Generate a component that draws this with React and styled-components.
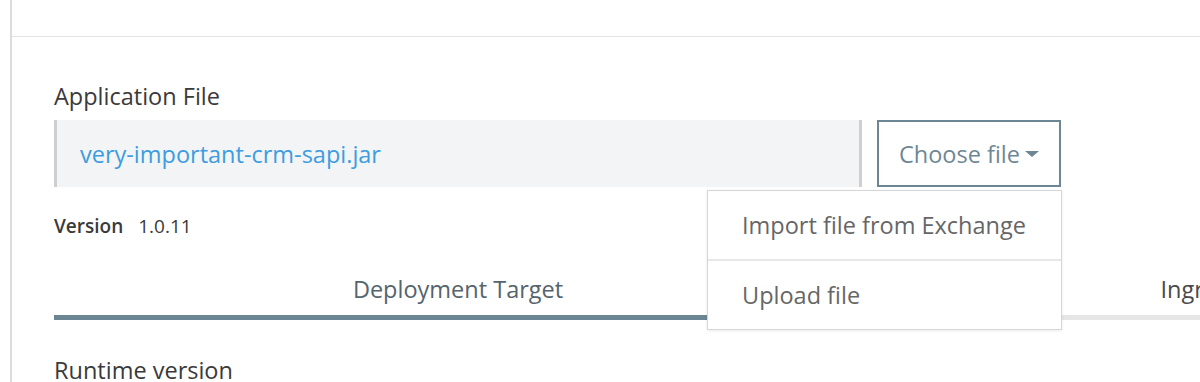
import styled, { createGlobalStyle } from "styled-components";

const GlobalStyles = createGlobalStyle`
  html, body {
    margin: 0;
    padding: 0;
    background: #fff;
    font-family: "Open Sans", "Liberation Sans", sans-serif;
  }
`;

const Page = styled.div`
  margin-left: 10px;
  border-left: 2px solid #dcdcdc;
  height: 382px;
  overflow: hidden;
`;

const TopBar = styled.div`
  height: 36px;
  border-bottom: 1px solid #e4e4e4;
`;

const Content = styled.div`
  position: relative;
  padding: 44px 0 0 42px;
`;

const Label = styled.div`
  font-size: 23.5px;
  line-height: 30px;
  color: #3a3a3a;
  margin-bottom: 9px;
`;

const FileRow = styled.div`
  display: flex;
  gap: 15px;
`;

const FileInput = styled.div`
  box-sizing: border-box;
  width: 808px;
  height: 67px;
  display: flex;
  align-items: center;
  padding-left: 23px;
  background: #f3f4f5;
  border-left: 3px solid #cfcfcf;
  border-right: 3px solid #cfcfcf;
  color: #3d9de0;
  font-size: 23.5px;
`;

const ChooseButton = styled.button`
  box-sizing: border-box;
  width: 184px;
  height: 67px;
  display: flex;
  align-items: center;
  gap: 5px;
  padding: 0 0 0 20px;
  background: #fff;
  border: 2px solid #6d8694;
  color: #6f8795;
  font-family: inherit;
  font-size: 23.5px;
`;

const Caret = styled.span`
  width: 0;
  height: 0;
  border-left: 7.5px solid transparent;
  border-right: 7.5px solid transparent;
  border-top: 6px solid #6f8795;
  margin-top: 1px;
`;

const Menu = styled.div`
  position: absolute;
  left: 695px;
  top: 153px;
  width: 353px;
  background: #fff;
  border: 1px solid #d6d6d6;
  box-shadow: 0 1px 3px rgba(0, 0, 0, 0.08);
  z-index: 2;
`;

const MenuItem = styled.div`
  height: 68px;
  display: flex;
  align-items: center;
  padding-left: 34px;
  font-size: 23.5px;
  color: #666;
  & + & {
    border-top: 2px solid #e8e8e8;
  }
`;

const VersionRow = styled.div`
  display: flex;
  gap: 15px;
  margin-top: 27px;
  font-size: 19px;
  line-height: 24px;
  color: #3a3a3a;
`;

const VersionKey = styled.span`
  font-weight: 600;
`;

const Tabs = styled.div`
  display: flex;
  margin-top: 35px;
`;

const Tab = styled.div`
  flex: 0 0 ${(p) => p.$width}px;
  height: 42px;
  display: flex;
  justify-content: center;
  align-items: flex-start;
  font-size: 23.5px;
  line-height: 32px;
  color: ${(p) => (p.$active ? "#55646d" : "#4a4a4a")};
  border-bottom: 5px solid ${(p) => (p.$active ? "#6c8592" : "#e6e6e6")};
`;

const SectionLabel = styled.div`
  font-size: 23.5px;
  line-height: 32px;
  color: #3a3a3a;
  margin-top: 34px;
`;

export default function App() {
  return (
    <>
      <GlobalStyles />
      <Page>
        <TopBar />
        <Content>
          <Label>Application File</Label>
          <FileRow>
            <FileInput>very-important-crm-sapi.jar</FileInput>
            <ChooseButton>
              Choose file <Caret />
            </ChooseButton>
          </FileRow>
          <Menu>
            <MenuItem>Import file from Exchange</MenuItem>
            <MenuItem>Upload file</MenuItem>
          </Menu>
          <VersionRow>
            <VersionKey>Version</VersionKey>
            <span>1.0.11</span>
          </VersionRow>
          <Tabs>
            <Tab $active $width={808}>Deployment Target</Tab>
            <Tab $width={676}>Ingress</Tab>
          </Tabs>
          <SectionLabel>Runtime version</SectionLabel>
        </Content>
      </Page>
    </>
  );
}
